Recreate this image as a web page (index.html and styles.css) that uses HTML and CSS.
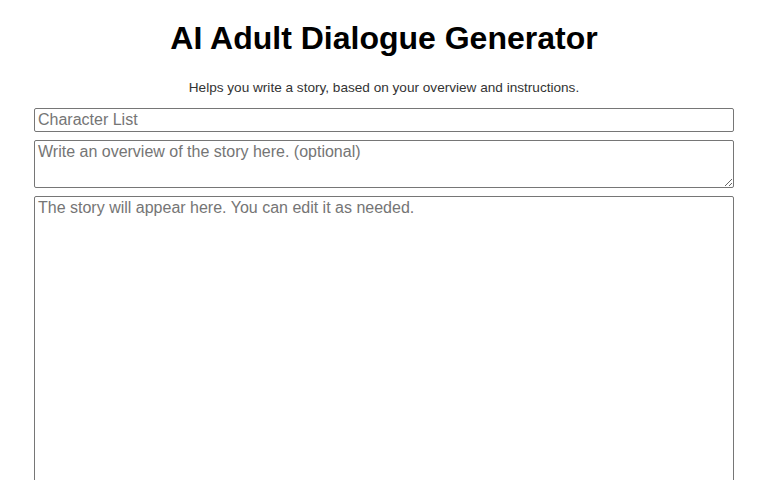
FILE: index.html
```html
<!DOCTYPE html>
<html lang="en">
<head>
  <meta charset="UTF-8" />
  <meta name="viewport" content="width=device-width, initial-scale=1.0"/>
  <title>AI Adult Dialogue Generator</title>
  <link rel="stylesheet" href="styles.css">
</head>
<body>
  <div id="app">
    <h1>AI Adult Dialogue Generator</h1>
    <p class="subtitle">Helps you write a story, based on your overview and instructions.</p>
    <form id="story-form">
      <input type="text" id="characters" placeholder="Character List" />
      <textarea id="overview" placeholder="Write an overview of the story here. (optional)"></textarea>
      <textarea id="story" placeholder="The story will appear here. You can edit it as needed."></textarea>
    </form>
  </div>
</body>
</html>
```

FILE: styles.css
```css
* {
  box-sizing: border-box;
}

body {
  margin: 0;
  padding: 0;
  background: #fff;
  color: #000;
  font-family: 'Liberation Sans', Arial, sans-serif;
}

#app {
  width: 700px;
  margin: 0 auto;
  padding-top: 18px;
}

h1 {
  margin: 0;
  font-size: 32px;
  line-height: 40px;
  text-align: center;
}

.subtitle {
  margin: 22px 0 12px;
  font-size: 13.6px;
  line-height: 16px;
  color: #333;
  text-align: center;
}

#story-form {
  display: flex;
  flex-direction: column;
  gap: 8px;
}

#story-form input,
#story-form textarea {
  width: 100%;
  margin: 0;
  padding: 2px 3px;
  border: 1px solid #767676;
  border-radius: 2px;
  font-family: 'Liberation Sans', Arial, sans-serif;
  font-size: 16px;
  color: #000;
  background: #fff;
}

#story-form input {
  height: 24px;
  padding: 1px 3px;
}

#story-form textarea {
  resize: vertical;
  line-height: normal;
}

#overview {
  height: 48px;
}

#story {
  height: 400px;
}

::placeholder {
  color: #757575;
}
```
